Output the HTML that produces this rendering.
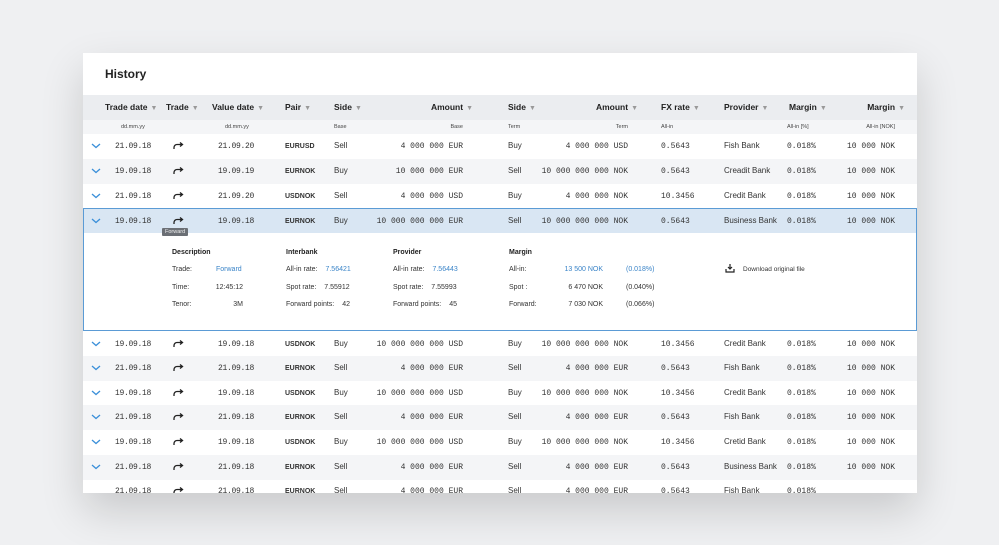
<!DOCTYPE html>
<html><head><meta charset="utf-8">
<style>
*{margin:0;padding:0;box-sizing:border-box}
body{width:999px;height:545px;background:#eff0f2;font-family:"Liberation Sans",sans-serif;color:#222;position:relative;overflow:hidden}
.card{position:absolute;left:83px;top:53px;width:834px;height:440px;background:#fff;overflow:hidden;box-shadow:0 18px 40px rgba(0,0,0,.16)}
.title{position:absolute;left:22px;top:14px;font-size:12px;font-weight:bold;color:#222}
.hdr{position:absolute;left:0;top:42px;width:834px;height:25px;background:#ebedf0}
.sub{position:absolute;left:0;top:67px;width:834px;height:14px;background:#f4f5f7}
.r{position:absolute;left:0;width:834px;height:25px}
.r span{position:absolute;top:0;line-height:25px;white-space:nowrap}
.hdr span{position:absolute;line-height:25px;font-size:8.5px;font-weight:bold;color:#222;white-space:nowrap}
.hdr i{font-style:normal;color:#999;font-size:7px;margin-left:3px}
.sub span{position:absolute;line-height:14px;font-size:5.5px;color:#444;white-space:nowrap}
.g{background:#f4f5f7}
.m{font-family:"Liberation Mono",monospace;font-size:8px;color:#333}
.r span.s{font-size:8px;color:#333;top:-1px}
.p{font-size:7px;font-weight:bold;color:#333}
.ch{left:8px;color:#3a8fd9}
.sel{background:#d9e6f3;border:1px solid #5b9bd5;border-bottom:none}
.det{position:absolute;left:0;top:180px;width:834px;height:98px;border:1px solid #5b9bd5;border-top:none;background:#fff}
.det span{position:absolute;font-size:7px;color:#333;white-space:nowrap}
.det b{position:absolute;font-size:7px;color:#222;white-space:nowrap}
.bl{color:#3a84c8!important}
.tt{position:absolute;left:79px;top:175px;background:#6b6f75;color:#eee;font-size:5.5px;padding:1px 3px;border-radius:1px}
.d{letter-spacing:-0.3px}
</style></head><body>
<div class="card">
<div class="title">History</div>
<div class="hdr">
<span style="left:22px">Trade date<i>▼</i></span>
<span style="left:83px">Trade<i>▼</i></span>
<span style="left:129px">Value date<i>▼</i></span>
<span style="left:202px">Pair<i>▼</i></span>
<span style="left:251px">Side<i>▼</i></span>
<span style="right:444px">Amount<i>▼</i></span>
<span style="left:425px">Side<i>▼</i></span>
<span style="right:279px">Amount<i>▼</i></span>
<span style="left:578px">FX rate<i>▼</i></span>
<span style="left:641px">Provider<i>▼</i></span>
<span style="left:706px">Margin<i>▼</i></span>
<span style="right:12px">Margin<i>▼</i></span>
</div>
<div class="sub">
<span style="left:38px">dd.mm.yy</span>
<span style="left:142px">dd.mm.yy</span>
<span style="left:251px">Base</span>
<span style="right:454px">Base</span>
<span style="left:425px">Term</span>
<span style="right:289px">Term</span>
<span style="left:578px">All-in</span>
<span style="left:704px">All-in [%]</span>
<span style="right:22px">All-in [NOK]</span>
</div>

<div class="r" style="top:81px"><span class="ch"><svg width="10" height="25"><path d="M1 10l4 3.5 4-3.5" fill="none" stroke="#3a8fd9" stroke-width="1.3"/></svg></span><span class="m d" style="left:32px">21.09.18</span><span style="left:89px"><svg width="12" height="25"><path d="M2 15v-1.5a3 3 0 0 1 3-3h5M8 8.5l2.5 2-2.5 2" fill="none" stroke="#222" stroke-width="1.3"/></svg></span><span class="m d" style="left:135px">21.09.20</span><span class="p" style="left:202px">EURUSD</span><span class="s" style="left:251px">Sell</span><span class="m" style="right:454px">4 000 000 EUR</span><span class="s" style="left:425px">Buy</span><span class="m" style="right:289px">4 000 000 USD</span><span class="m" style="left:578px">0.5643</span><span class="s" style="left:641px">Fish Bank</span><span class="m" style="left:704px">0.018%</span><span class="m" style="right:22px">10 000 NOK</span></div>

<div class="r g" style="top:106px"><span class="ch"><svg width="10" height="25"><path d="M1 10l4 3.5 4-3.5" fill="none" stroke="#3a8fd9" stroke-width="1.3"/></svg></span><span class="m d" style="left:32px">19.09.18</span><span style="left:89px"><svg width="12" height="25"><path d="M2 15v-1.5a3 3 0 0 1 3-3h5M8 8.5l2.5 2-2.5 2" fill="none" stroke="#222" stroke-width="1.3"/></svg></span><span class="m d" style="left:135px">19.09.19</span><span class="p" style="left:202px">EURNOK</span><span class="s" style="left:251px">Buy</span><span class="m" style="right:454px">10 000 000 EUR</span><span class="s" style="left:425px">Sell</span><span class="m" style="right:289px">10 000 000 000 NOK</span><span class="m" style="left:578px">0.5643</span><span class="s" style="left:641px">Creadit Bank</span><span class="m" style="left:704px">0.018%</span><span class="m" style="right:22px">10 000 NOK</span></div>

<div class="r" style="top:131px"><span class="ch"><svg width="10" height="25"><path d="M1 10l4 3.5 4-3.5" fill="none" stroke="#3a8fd9" stroke-width="1.3"/></svg></span><span class="m d" style="left:32px">21.09.18</span><span style="left:89px"><svg width="12" height="25"><path d="M2 15v-1.5a3 3 0 0 1 3-3h5M8 8.5l2.5 2-2.5 2" fill="none" stroke="#222" stroke-width="1.3"/></svg></span><span class="m d" style="left:135px">21.09.20</span><span class="p" style="left:202px">USDNOK</span><span class="s" style="left:251px">Sell</span><span class="m" style="right:454px">4 000 000 USD</span><span class="s" style="left:425px">Buy</span><span class="m" style="right:289px">4 000 000 NOK</span><span class="m" style="left:578px">10.3456</span><span class="s" style="left:641px">Credit Bank</span><span class="m" style="left:704px">0.018%</span><span class="m" style="right:22px">10 000 NOK</span></div>

<div class="r sel" style="top:155px"><span class="ch" style="left:7px"><svg width="10" height="25"><path d="M1 10l4 3.5 4-3.5" fill="none" stroke="#3a8fd9" stroke-width="1.3"/></svg></span><span class="m d" style="left:31px">19.09.18</span><span style="left:88px"><svg width="12" height="25"><path d="M2 15v-1.5a3 3 0 0 1 3-3h5M8 8.5l2.5 2-2.5 2" fill="none" stroke="#222" stroke-width="1.3"/></svg></span><span class="m d" style="left:134px">19.09.18</span><span class="p" style="left:201px">EURNOK</span><span class="s" style="left:250px">Buy</span><span class="m" style="right:453px">10 000 000 000 EUR</span><span class="s" style="left:424px">Sell</span><span class="m" style="right:288px">10 000 000 000 NOK</span><span class="m" style="left:577px">0.5643</span><span class="s" style="left:640px">Business Bank</span><span class="m" style="left:703px">0.018%</span><span class="m" style="right:21px">10 000 NOK</span></div>

<div class="det">
<b style="left:88px;top:16px">Description</b>
<span style="left:88px;top:33px">Trade:</span><span class="bl" style="left:132px;top:33px">Forward</span>
<span style="left:88px;top:51px">Time:</span><span style="right:673px;top:51px">12:45:12</span>
<span style="left:88px;top:68px">Tenor:</span><span style="right:673px;top:68px">3M</span>
<b style="left:202px;top:16px">Interbank</b>
<span style="left:202px;top:33px">All-in rate: <span class="bl" style="position:static;margin-left:6px">7.56421</span></span>
<span style="left:202px;top:51px">Spot rate: <span style="position:static;margin-left:6px">7.55912</span></span>
<span style="left:202px;top:68px">Forward points: <span style="position:static;margin-left:6px">42</span></span>
<b style="left:309px;top:16px">Provider</b>
<span style="left:309px;top:33px">All-in rate: <span class="bl" style="position:static;margin-left:6px">7.56443</span></span>
<span style="left:309px;top:51px">Spot rate: <span style="position:static;margin-left:6px">7.55993</span></span>
<span style="left:309px;top:68px">Forward points: <span style="position:static;margin-left:6px">45</span></span>
<b style="left:425px;top:16px">Margin</b>
<span style="left:425px;top:33px">All-in:</span><span class="bl" style="right:313px;top:33px">13 500 NOK</span><span class="bl" style="left:542px;top:33px">(0.018%)</span>
<span style="left:425px;top:51px">Spot :</span><span style="right:313px;top:51px">6 470 NOK</span><span style="left:542px;top:51px">(0.040%)</span>
<span style="left:425px;top:68px">Forward:</span><span style="right:313px;top:68px">7 030 NOK</span><span style="left:542px;top:68px">(0.066%)</span>
<span style="left:641px;top:31px"><svg width="10" height="9"><path d="M5 0v5M3 3l2 2 2-2M1 5v3h8V5" fill="none" stroke="#222" stroke-width="1.2"/></svg></span>
<span style="left:659px;top:33px;font-size:6.5px">Download original file</span>
</div>
<div class="tt">Forward</div>

<div class="r" style="top:279px"><span class="ch"><svg width="10" height="25"><path d="M1 10l4 3.5 4-3.5" fill="none" stroke="#3a8fd9" stroke-width="1.3"/></svg></span><span class="m d" style="left:32px">19.09.18</span><span style="left:89px"><svg width="12" height="25"><path d="M2 15v-1.5a3 3 0 0 1 3-3h5M8 8.5l2.5 2-2.5 2" fill="none" stroke="#222" stroke-width="1.3"/></svg></span><span class="m d" style="left:135px">19.09.18</span><span class="p" style="left:202px">USDNOK</span><span class="s" style="left:251px">Buy</span><span class="m" style="right:454px">10 000 000 000 USD</span><span class="s" style="left:425px">Buy</span><span class="m" style="right:289px">10 000 000 000 NOK</span><span class="m" style="left:578px">10.3456</span><span class="s" style="left:641px">Credit Bank</span><span class="m" style="left:704px">0.018%</span><span class="m" style="right:22px">10 000 NOK</span></div>

<div class="r g" style="top:303px"><span class="ch"><svg width="10" height="25"><path d="M1 10l4 3.5 4-3.5" fill="none" stroke="#3a8fd9" stroke-width="1.3"/></svg></span><span class="m d" style="left:32px">21.09.18</span><span style="left:89px"><svg width="12" height="25"><path d="M2 15v-1.5a3 3 0 0 1 3-3h5M8 8.5l2.5 2-2.5 2" fill="none" stroke="#222" stroke-width="1.3"/></svg></span><span class="m d" style="left:135px">21.09.18</span><span class="p" style="left:202px">EURNOK</span><span class="s" style="left:251px">Sell</span><span class="m" style="right:454px">4 000 000 EUR</span><span class="s" style="left:425px">Sell</span><span class="m" style="right:289px">4 000 000 EUR</span><span class="m" style="left:578px">0.5643</span><span class="s" style="left:641px">Fish Bank</span><span class="m" style="left:704px">0.018%</span><span class="m" style="right:22px">10 000 NOK</span></div>

<div class="r" style="top:328px"><span class="ch"><svg width="10" height="25"><path d="M1 10l4 3.5 4-3.5" fill="none" stroke="#3a8fd9" stroke-width="1.3"/></svg></span><span class="m d" style="left:32px">19.09.18</span><span style="left:89px"><svg width="12" height="25"><path d="M2 15v-1.5a3 3 0 0 1 3-3h5M8 8.5l2.5 2-2.5 2" fill="none" stroke="#222" stroke-width="1.3"/></svg></span><span class="m d" style="left:135px">19.09.18</span><span class="p" style="left:202px">USDNOK</span><span class="s" style="left:251px">Buy</span><span class="m" style="right:454px">10 000 000 000 USD</span><span class="s" style="left:425px">Buy</span><span class="m" style="right:289px">10 000 000 000 NOK</span><span class="m" style="left:578px">10.3456</span><span class="s" style="left:641px">Credit Bank</span><span class="m" style="left:704px">0.018%</span><span class="m" style="right:22px">10 000 NOK</span></div>

<div class="r g" style="top:352px"><span class="ch"><svg width="10" height="25"><path d="M1 10l4 3.5 4-3.5" fill="none" stroke="#3a8fd9" stroke-width="1.3"/></svg></span><span class="m d" style="left:32px">21.09.18</span><span style="left:89px"><svg width="12" height="25"><path d="M2 15v-1.5a3 3 0 0 1 3-3h5M8 8.5l2.5 2-2.5 2" fill="none" stroke="#222" stroke-width="1.3"/></svg></span><span class="m d" style="left:135px">21.09.18</span><span class="p" style="left:202px">EURNOK</span><span class="s" style="left:251px">Sell</span><span class="m" style="right:454px">4 000 000 EUR</span><span class="s" style="left:425px">Sell</span><span class="m" style="right:289px">4 000 000 EUR</span><span class="m" style="left:578px">0.5643</span><span class="s" style="left:641px">Fish Bank</span><span class="m" style="left:704px">0.018%</span><span class="m" style="right:22px">10 000 NOK</span></div>

<div class="r" style="top:377px"><span class="ch"><svg width="10" height="25"><path d="M1 10l4 3.5 4-3.5" fill="none" stroke="#3a8fd9" stroke-width="1.3"/></svg></span><span class="m d" style="left:32px">19.09.18</span><span style="left:89px"><svg width="12" height="25"><path d="M2 15v-1.5a3 3 0 0 1 3-3h5M8 8.5l2.5 2-2.5 2" fill="none" stroke="#222" stroke-width="1.3"/></svg></span><span class="m d" style="left:135px">19.09.18</span><span class="p" style="left:202px">USDNOK</span><span class="s" style="left:251px">Buy</span><span class="m" style="right:454px">10 000 000 000 USD</span><span class="s" style="left:425px">Buy</span><span class="m" style="right:289px">10 000 000 000 NOK</span><span class="m" style="left:578px">10.3456</span><span class="s" style="left:641px">Cretid Bank</span><span class="m" style="left:704px">0.018%</span><span class="m" style="right:22px">10 000 NOK</span></div>

<div class="r g" style="top:402px"><span class="ch"><svg width="10" height="25"><path d="M1 10l4 3.5 4-3.5" fill="none" stroke="#3a8fd9" stroke-width="1.3"/></svg></span><span class="m d" style="left:32px">21.09.18</span><span style="left:89px"><svg width="12" height="25"><path d="M2 15v-1.5a3 3 0 0 1 3-3h5M8 8.5l2.5 2-2.5 2" fill="none" stroke="#222" stroke-width="1.3"/></svg></span><span class="m d" style="left:135px">21.09.18</span><span class="p" style="left:202px">EURNOK</span><span class="s" style="left:251px">Sell</span><span class="m" style="right:454px">4 000 000 EUR</span><span class="s" style="left:425px">Sell</span><span class="m" style="right:289px">4 000 000 EUR</span><span class="m" style="left:578px">0.5643</span><span class="s" style="left:641px">Business Bank</span><span class="m" style="left:704px">0.018%</span><span class="m" style="right:22px">10 000 NOK</span></div>

<div class="r" style="top:426px"><span class="m d" style="left:32px">21.09.18</span><span style="left:89px"><svg width="12" height="25"><path d="M2 15v-1.5a3 3 0 0 1 3-3h5M8 8.5l2.5 2-2.5 2" fill="none" stroke="#222" stroke-width="1.3"/></svg></span><span class="m d" style="left:135px">21.09.18</span><span class="p" style="left:202px">EURNOK</span><span class="s" style="left:251px">Sell</span><span class="m" style="right:454px">4 000 000 EUR</span><span class="s" style="left:425px">Sell</span><span class="m" style="right:289px">4 000 000 EUR</span><span class="m" style="left:578px">0.5643</span><span class="s" style="left:641px">Fish Bank</span><span class="m" style="left:704px">0.018%</span></div>
</div>
</body></html>
